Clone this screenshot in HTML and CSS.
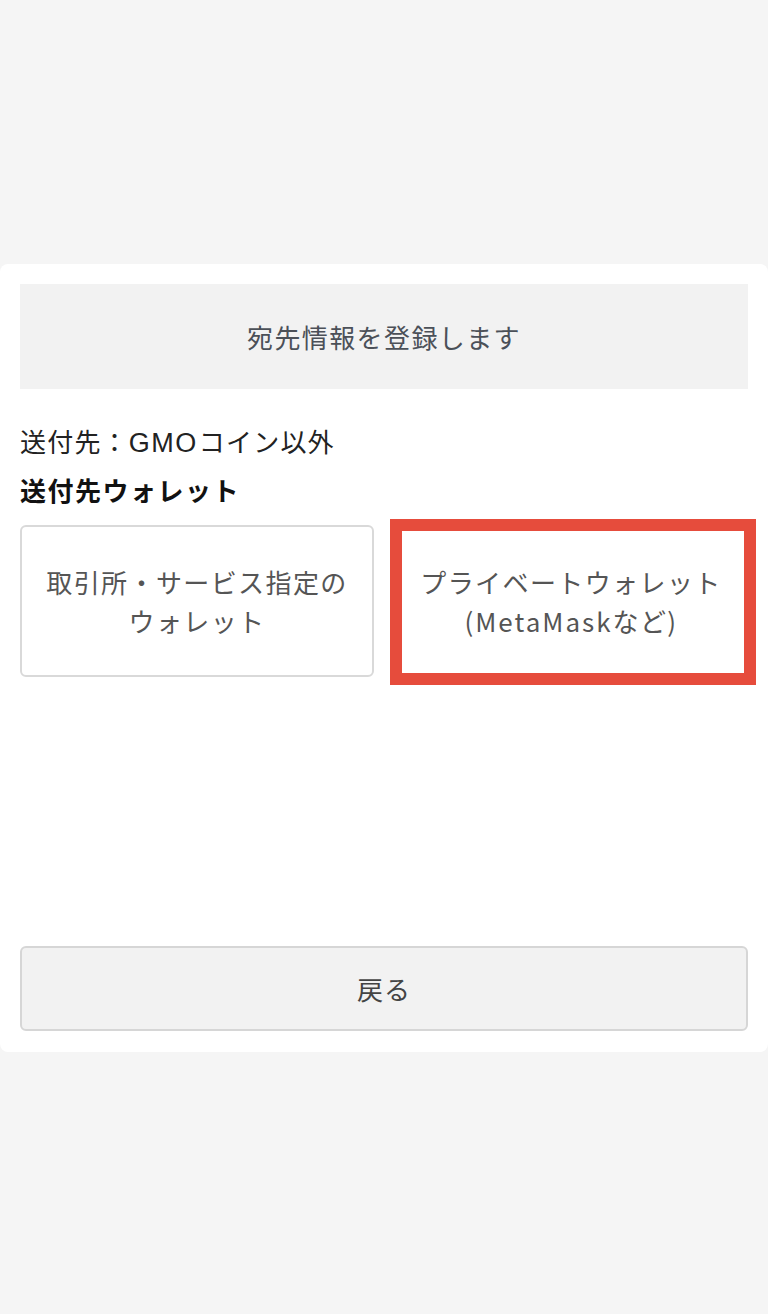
FILE: index.html
```html
<!DOCTYPE html>
<html lang="ja">
<head>
<meta charset="utf-8">
<title>宛先情報を登録します</title>
<link rel="stylesheet" href="styles.css">
</head>
<body>
<main class="card">
  <div class="heading">宛先情報を登録します</div>
  <p class="dest">送付先：<span class="gmo">GMO</span>コイン以外</p>
  <p class="label">送付先ウォレット</p>
  <div class="choices">
    <button class="choice">取引所・サービス指定の<br>ウォレット</button>
    <button class="choice highlighted">プライベートウォレット<br><span class="latin">(MetaMask</span>など)<span class="mark"></span></button>
  </div>
  <button class="back">戻る</button>
</main>
</body>
</html>
```

FILE: styles.css
```css
html, body {
  margin: 0;
  padding: 0;
  background: #f5f5f5;
  font-family: "Noto Sans CJK JP", "Noto Sans", sans-serif;
}
body {
  padding-top: 264px;
  min-height: 1314px;
  box-sizing: border-box;
}
.card {
  background: #fff;
  border-radius: 8px;
  padding: 20px 20px 21px;
  display: flex;
  flex-direction: column;
}
.heading {
  height: 105px;
  background: #f2f2f2;
  display: flex;
  align-items: center;
  justify-content: center;
  font-size: 26px;
  letter-spacing: 1.4px;
  color: #4b5058;
}
.dest, .label {
  margin: 0;
  font-size: 26px;
  line-height: 44px;
  height: 44px;
  color: #222;
}
.latin { letter-spacing: 2px; }
.gmo {
  font-family: "Liberation Sans", "Noto Sans CJK JP", sans-serif;
  font-size: 27px;
  line-height: 1;
  letter-spacing: 1.5px;
  margin-right: 1px;
}
.dest { margin-top: 30px; letter-spacing: 1.2px; }
.label { margin-top: 5px; font-weight: bold; color: #111; letter-spacing: 1.5px; }
.choices {
  margin-top: 13px;
  display: grid;
  grid-template-columns: 1fr 1fr;
  gap: 20px;
}
.choice {
  position: relative;
  height: 152px;
  background: #fff;
  border: 2px solid #d9d9d9;
  border-radius: 6px;
  font-family: inherit;
  font-size: 26px;
  line-height: 39px;
  letter-spacing: 1.4px;
  color: #555;
  padding: 0;
}
.mark {
  position: absolute;
  top: -8px;
  left: -6px;
  right: -10px;
  bottom: -10px;
  border: 12px solid #e64c3c;
  pointer-events: none;
}
.back {
  margin-top: 269px;
  height: 85px;
  background: #f2f2f2;
  border: 2px solid #d6d6d6;
  border-radius: 6px;
  font-family: inherit;
  font-size: 26px;
  color: #444;
  letter-spacing: 1px;
}
```
